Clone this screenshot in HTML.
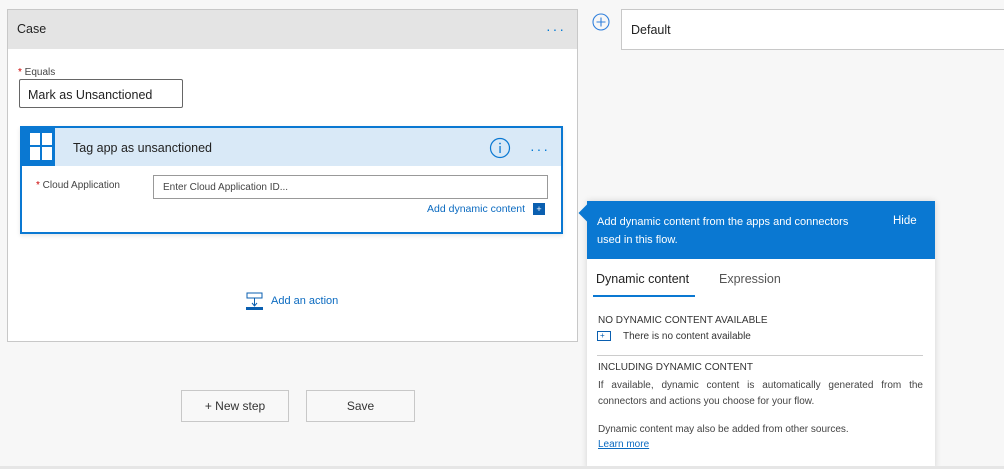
<!DOCTYPE html>
<html><head><style>
*{box-sizing:border-box;margin:0;padding:0}
body{width:1004px;height:469px;background:#f7f7f7;font-family:"Liberation Sans",sans-serif;position:relative;overflow:hidden;color:#333}
.a{position:absolute}
</style></head><body>
<div class="a" style="left:7px;top:9px;width:571px;height:333px;background:#fff;border:1px solid #c8c8c8"></div>
<div class="a" style="left:8px;top:10px;width:569px;height:39px;background:#e4e4e4"></div>
<div class="a" style="left:17px;top:22px;font-size:12.5px;color:#222">Case</div>
<div class="a" style="left:546px;top:21px;font-size:14px;color:#0078d4;letter-spacing:2px">···</div>
<div class="a" style="left:18px;top:67px;font-size:10px;color:#444"><span style="color:#c00">*</span> Equals</div>
<div class="a" style="left:19px;top:79px;width:164px;height:29px;border:1px solid #666;border-radius:2px;font-size:12.5px;padding:8px 0 0 8px;color:#222">Mark as Unsanctioned</div>
<div class="a" style="left:20px;top:126px;width:543px;height:108px;border:2px solid #0a78d2;background:#fff;box-shadow:0 2px 4px rgba(0,0,0,.1)"></div>
<div class="a" style="left:22px;top:128px;width:539px;height:38px;background:#d9e9f7"></div>
<div class="a" style="left:22px;top:128px;width:33px;height:38px;background:#0a78d2"></div>
<svg class="a" style="left:28px;top:133px" width="24" height="28"><rect x="2" y="0" width="10" height="12" fill="#fff"/><rect x="14" y="0" width="10" height="12" fill="#fff"/><rect x="2" y="14" width="10" height="13" fill="#fff"/><rect x="14" y="14" width="10" height="13" fill="#fff"/></svg>
<div class="a" style="left:73px;top:141px;font-size:12.5px;color:#222">Tag app as unsanctioned</div>
<svg class="a" style="left:489px;top:137px" width="22" height="22"><circle cx="11" cy="11" r="9.5" fill="none" stroke="#0a78d2" stroke-width="1.2"/><rect x="10.4" y="9" width="1.3" height="7" fill="#0a78d2"/><circle cx="11" cy="6.5" r=".9" fill="#0a78d2"/></svg>
<div class="a" style="left:530px;top:141px;font-size:14px;color:#0078d4;letter-spacing:2px">···</div>
<div class="a" style="left:36px;top:180px;font-size:10px;color:#444"><span style="color:#c00">*</span> Cloud Application</div>
<div class="a" style="left:153px;top:175px;width:395px;height:24px;border:1px solid #999;font-size:10px;color:#444;padding:6px 0 0 9px">Enter Cloud Application ID...</div>
<div class="a" style="left:427px;top:203px;font-size:10.5px;color:#0a6ac0">Add dynamic content</div>
<div class="a" style="left:533px;top:203px;width:12px;height:12px;background:#0a5fb0;color:#fff;font-size:9px;text-align:center;line-height:12px">+</div>
<svg class="a" style="left:246px;top:292px" width="18" height="20"><rect x="1" y="1" width="15" height="5" fill="none" stroke="#0a5fb0"/><line x1="8.5" y1="6" x2="8.5" y2="14" stroke="#0a5fb0"/><path d="M6 11l2.5 3 2.5-3" fill="none" stroke="#0a5fb0"/><rect x="0" y="15" width="17" height="3" fill="#0a5fb0"/></svg>
<div class="a" style="left:271px;top:295px;font-size:11px;color:#0a6ac0">Add an action</div>
<div class="a" style="left:181px;top:390px;width:108px;height:32px;border:1px solid #c8c8c8;background:#f8f8f8;font-size:12px;text-align:center;line-height:30px;color:#333">+ New step</div>
<div class="a" style="left:306px;top:390px;width:109px;height:32px;border:1px solid #c8c8c8;background:#f8f8f8;font-size:12px;text-align:center;line-height:30px;color:#333">Save</div>
<svg class="a" style="left:592px;top:13px" width="18" height="18"><circle cx="9" cy="9" r="8" fill="none" stroke="#2f7fdc" stroke-width="1.1"/><path d="M9 4.5v9M4.5 9h9" stroke="#2f7fdc" stroke-width="1.1"/></svg>
<div class="a" style="left:621px;top:9px;width:390px;height:41px;background:#fff;border:1px solid #c8c8c8"></div>
<div class="a" style="left:631px;top:23px;font-size:12.5px;color:#222">Default</div>
<div class="a" style="left:587px;top:201px;width:348px;height:268px;background:#fff;box-shadow:0 0 6px rgba(0,0,0,.15)"></div>
<div class="a" style="left:581px;top:207px;width:12px;height:12px;background:#0a78d2;transform:rotate(45deg)"></div>
<div class="a" style="left:587px;top:201px;width:348px;height:58px;background:#0a78d2"></div>
<div class="a" style="left:597px;top:213px;font-size:11px;line-height:18px;color:#fff;width:268px">Add dynamic content from the apps and connectors used in this flow.</div>
<div class="a" style="left:893px;top:215px;font-size:11.5px;color:#fff">Hide</div>
<div class="a" style="left:596px;top:272px;font-size:12.5px;color:#222">Dynamic content</div>
<div class="a" style="left:719px;top:272px;font-size:12.5px;color:#555">Expression</div>
<div class="a" style="left:593px;top:295px;width:102px;height:2px;background:#0a78d2"></div>
<div class="a" style="left:598px;top:315px;font-size:10px;color:#333">NO DYNAMIC CONTENT AVAILABLE</div>
<div class="a" style="left:597px;top:331px;width:14px;height:10px;border:1px solid #0a5fb0;font-size:8px;line-height:8px;color:#0a5fb0;padding-left:2px">+</div>
<div class="a" style="left:623px;top:331px;font-size:10px;color:#333">There is no content available</div>
<div class="a" style="left:597px;top:355px;width:326px;height:1px;background:#ccc"></div>
<div class="a" style="left:598px;top:362px;font-size:10px;color:#333">INCLUDING DYNAMIC CONTENT</div>
<div class="a" style="left:598px;top:378px;width:325px;font-size:10px;line-height:16px;color:#444;text-align:justify">If available, dynamic content is automatically generated from the connectors and actions you choose for your flow.</div>
<div class="a" style="left:598px;top:424px;font-size:10px;color:#444">Dynamic content may also be added from other sources.</div>
<div class="a" style="left:598px;top:439px;font-size:10px;color:#0a6ac0;text-decoration:underline">Learn more</div>
<div class="a" style="left:0;top:466px;width:1004px;height:3px;background:#e6e6e6"></div>
</body></html>
